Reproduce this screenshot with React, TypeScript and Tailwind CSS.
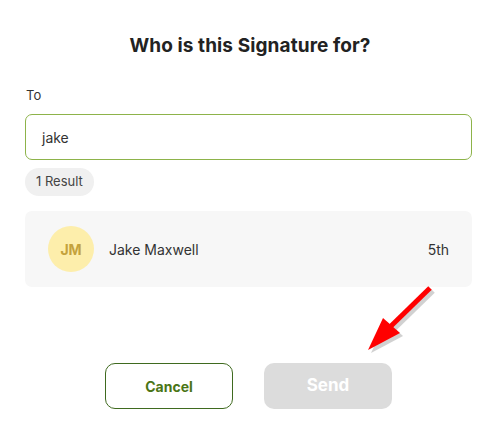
export default function App() {
  return (
    <div
      className="relative w-[500px] h-[432px] bg-white px-[25px] pt-[34px]"
      style={{ fontFamily: "Inter, 'Noto Sans', sans-serif" }}
    >
      <h2 className="text-center text-[19px] font-bold text-[#222222] leading-6 tracking-[0.1px]">
        Who is this Signature for?
      </h2>

      <div className="mt-[27px] text-[13px] text-[#333333] leading-5 pl-px">To</div>

      <div className="mt-[9px] h-[46px] w-[447px] rounded-[7px] border border-[#8db34a] flex items-center px-4">
        <span className="text-[14px] text-[#333333]">jake</span>
      </div>

      <div className="mt-2 inline-flex h-[28px] items-center rounded-full bg-[#f0f0f0] px-[11px] text-[13px] text-[#444444]">
        1 Result
      </div>

      <div className="mt-[15px] h-[76px] w-[447px] rounded-[7px] bg-[#f7f7f7] flex items-center pl-[23px] pr-[23px]">
        <div className="w-[46px] h-[46px] rounded-full bg-[#fdeeab] flex items-center justify-center text-[14px] font-bold text-[#c4a23c]">
          JM
        </div>
        <span className="ml-[15px] text-[14px] text-[#333333]">Jake Maxwell</span>
        <span className="ml-auto text-[14px] text-[#333333]">5th</span>
      </div>

      <div className="mt-[76px] flex gap-[31px] pl-[80px]">
        <button className="w-[128px] h-[46px] rounded-[10px] border border-[#3f6a1f] bg-white text-[14px] font-bold text-[#4a7516]">
          Cancel
        </button>
        <button className="w-[128px] h-[46px] rounded-[10px] bg-[#dcdcdc] text-[17px] font-bold text-white">
          Send
        </button>
      </div>

      <svg
        className="absolute left-[360px] top-[283px]"
        width="80"
        height="75"
        viewBox="0 0 80 75"
      >
        <g transform="translate(3 3)" fill="#9a9a9a" opacity="0.45">
          <line x1="70" y1="5" x2="30" y2="44" stroke="#9a9a9a" strokeWidth="5" />
          <polygon points="8,67 23,35 40,50" />
        </g>
        <line x1="70" y1="5" x2="30" y2="44" stroke="#ff0000" strokeWidth="5" />
        <polygon points="8,67 23,35 40,50" fill="#ff0000" />
      </svg>
    </div>
  );
}
